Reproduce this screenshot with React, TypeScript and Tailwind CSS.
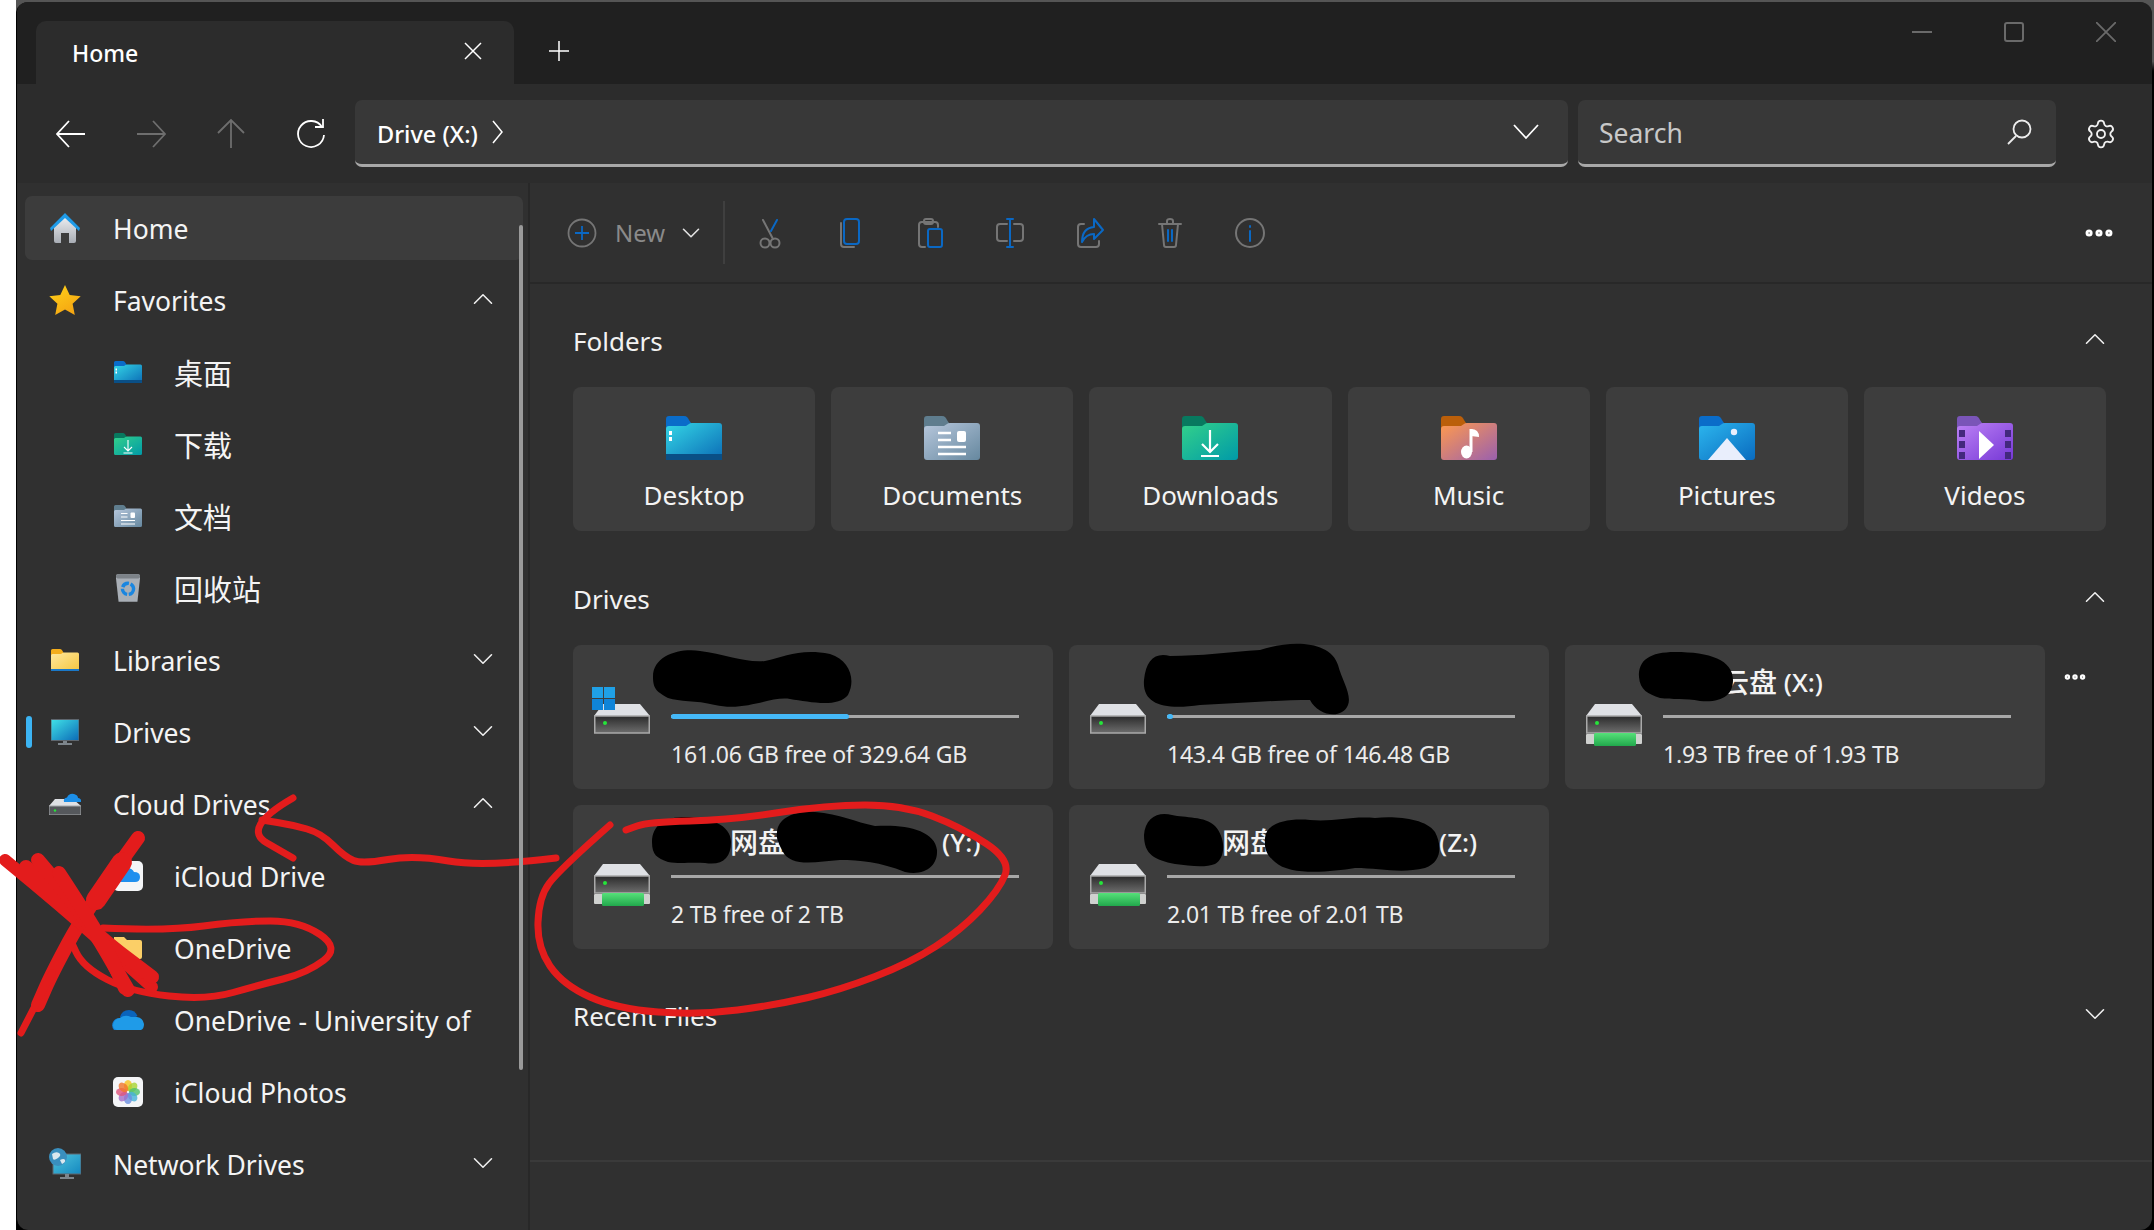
import type { ReactNode } from "react";
import { ChevronDown, ChevronUp, Ellipsis, Settings } from "lucide-react";

const uiFont = "font-['Noto_Sans','Noto_Sans_CJK_SC',sans-serif]";

type Pt = [number, number];

// turns a list of points into a soft pen stroke
function pen(points: Pt[]) {
  let d = `M${points[0][0]} ${points[0][1]}`;
  for (let i = 1; i < points.length - 1; i++) {
    const [x, y] = points[i];
    const [nx, ny] = points[i + 1];
    d += ` Q${x} ${y} ${(x + nx) / 2} ${(y + ny) / 2}`;
  }
  const last = points[points.length - 1];
  return `${d} L${last[0]} ${last[1]}`;
}

function Folder({
  id,
  tab,
  from,
  to,
  small,
  children,
}: {
  id: string;
  tab: string;
  from: string;
  to: string;
  small?: boolean;
  children?: ReactNode;
}) {
  return (
    <svg viewBox="0 0 56 44" className={small ? "w-[28px] h-[22px]" : "w-[56px] h-[44px]"}>
      <defs>
        <linearGradient id={id} x1="0" y1="0" x2="1" y2="1">
          <stop offset="0" stopColor={from} />
          <stop offset="1" stopColor={to} />
        </linearGradient>
      </defs>
      <path d="M0 3a3 3 0 0 1 3-3h15c3 0 4 2 5 4l2 3v12H0z" fill={tab} />
      <path d="M0 13q0-3 3-3h17l3-2q1-1 3-1h27q3 0 3 3v31q0 3-3 3H3q-3 0-3-3z" fill={`url(#${id})`} />
      {children}
    </svg>
  );
}

const DesktopFolder = ({ small }: { small?: boolean }) => (
  <Folder id={small ? "dk-s" : "dk"} tab="#0a6cc9" from="#34d6e6" to="#0b6cb6" small={small}>
    <rect y="38" width="56" height="6" fill="#0a4f86" />
    <rect x="3" y="15" width="3" height="4" fill="#fff" />
    <rect x="3" y="21" width="3" height="4" fill="#fff" />
  </Folder>
);
const DocsFolder = ({ small }: { small?: boolean }) => (
  <Folder id={small ? "dc-s" : "dc"} tab="#5f7d8e" from="#b7c7dc" to="#66889f" small={small}>
    <path d="M14 17h13M14 24h13M14 31h28M14 38h28" stroke="#fff" strokeWidth="2.4" />
    <rect x="33" y="15" width="9" height="11" rx="2" fill="#fff" />
  </Folder>
);
const DownloadFolder = ({ small }: { small?: boolean }) => (
  <Folder id={small ? "dl-s" : "dl"} tab="#08795f" from="#33d18a" to="#009aa8" small={small}>
    <path d="M28 14v22M20 28l8 8 8-8M19 40h18" stroke="#fff" strokeWidth="2.2" fill="none" />
  </Folder>
);
const MusicFolder = () => (
  <Folder id="mu" tab="#bb5f0a" from="#ff9a4e" to="#9a60ae">
    <path d="M30 13v23" stroke="#fff" strokeWidth="3" />
    <ellipse cx="25.5" cy="36" rx="5.5" ry="6.5" fill="#fff" />
    <path d="M30 13q8 0 8 8l-8-1z" fill="#fff" />
  </Folder>
);
const PicturesFolder = () => (
  <Folder id="pi" tab="#0a6cc9" from="#2cb6ee" to="#0a6bbf">
    <path d="M28 22 9 44h38z" fill="#e9eefc" />
    <circle cx="35" cy="16" r="3.2" fill="#e9eefc" />
  </Folder>
);
const VideosFolder = () => (
  <Folder id="vi" tab="#7a55b8" from="#bd82f6" to="#7638d6">
    <path d="M22 15l15 14-15 14z" fill="#fff" />
    <path d="M2 14h6v7H2zM2 25h6v7H2zM2 36h6v7H2zM48 14h6v7h-6zM48 25h6v7h-6zM48 36h6v7h-6z" fill="#43287e" />
  </Folder>
);
const LibraryFolder = () => (
  <Folder id="lb" tab="#f4ad1b" from="#ffe89e" to="#f5c63f" small>
    <rect y="40" width="56" height="4" fill="#1a78c8" />
  </Folder>
);

const HomeIcon = () => (
  <svg viewBox="0 0 32 32" className="w-[32px] h-[32px]">
    <defs>
      <linearGradient id="hm" x1="0" y1="0" x2="0" y2="1">
        <stop offset="0" stopColor="#eef0f3" />
        <stop offset="1" stopColor="#a8adb5" />
      </linearGradient>
    </defs>
    <path d="M5 15 16 4l11 11v14a2 2 0 0 1-2 2h-5V21h-8v10H7a2 2 0 0 1-2-2z" fill="url(#hm)" />
    <path d="M16 1 31 16l-1 3L16 6 2 19l-1-3z" fill="#1f9be8" />
  </svg>
);

const StarIcon = () => (
  <svg viewBox="0 0 32 32" className="w-[32px] h-[32px]">
    <defs>
      <linearGradient id="st" x1="0" y1="0" x2="0.6" y2="1">
        <stop offset="0" stopColor="#ffd31a" />
        <stop offset="1" stopColor="#f5a612" />
      </linearGradient>
    </defs>
    <path d="M16 1l4.7 10 11 1.3-8.100 7.500L25.800 31 16 25.500 6.200 31l2.200-11.200L.3 12.300l11-1.300z" fill="url(#st)" />
  </svg>
);

const RecycleIcon = () => (
  <svg viewBox="0 0 28 32" className="w-[24px] h-[28px]">
    <path d="M0 2q0-2 2-2h24q2 0 2 2v3l-3 27H3L0 5z" fill="#a9afb6" />
    <rect x="0" y="0" width="28" height="5" rx="2" fill="#7c8288" />
    <circle cx="14" cy="17" r="6.500" fill="none" stroke="#1a86e0" strokeWidth="4" strokeDasharray="9 2" />
  </svg>
);

const MonitorIcon = () => (
  <svg viewBox="0 0 28 26" className="w-[28px] h-[26px]">
    <defs>
      <linearGradient id="mn" x1="0" y1="0" x2="1" y2="1">
        <stop offset="0" stopColor="#3fe0e6" />
        <stop offset="1" stopColor="#0c6cb8" />
      </linearGradient>
    </defs>
    <rect width="28" height="22" fill="#5e666e" />
    <rect x="0.500" y="1" width="27" height="20" fill="url(#mn)" />
    <rect x="12" y="22" width="4" height="2" fill="#7d858c" />
    <rect x="7" y="24" width="14" height="2" fill="#7d858c" />
  </svg>
);

const CloudDriveIcon = () => (
  <svg viewBox="0 0 32 22" className="w-[32px] h-[22px]">
    <path d="M0 13 6 6h18l8 7z" fill="#dfe1e5" />
    <rect y="13" width="32" height="9" fill="#55585c" stroke="#a6a8ab" strokeWidth="1" />
    <circle cx="6" cy="17.500" r="1.200" fill="#27e33a" />
    <path d="M15 9q-1-4 3-4.500Q20 0 25 1q4 1 4 4 3 .5 3 2.500V9z" fill="#1c8fe8" />
  </svg>
);

const ICloudIcon = () => (
  <svg viewBox="0 0 30 30" className="w-[30px] h-[30px]">
    <rect width="30" height="30" rx="5" fill="#f4f5f7" />
    <path d="M6 21q-4-1-3-5 1-3 4-3 1-6 7-6 5 0 7 4 6 0 6 5 0 5-5 5z" fill="#1f8fee" />
  </svg>
);

const OneDriveFolderIcon = () => (
  <svg viewBox="0 0 28 22" className="w-[28px] h-[22px]">
    <path d="M0 0h10l3 3h13q2 0 2 2v15q0 2-2 2H2q-2 0-2-2z" fill="#fbcf67" />
  </svg>
);

const OneDriveCloudIcon = () => (
  <svg viewBox="0 0 32 22" className="w-[32px] h-[22px]">
    <path d="M8 8q2-7 9-7 6 0 8.500 6L12 14z" fill="#0a64bb" />
    <path d="M2 21Q-1 17 1 13q2-4 7-4l5 3 2 9z" fill="#1481d8" />
    <path d="M8 9q5-4 11-1l6 0q6 1 7 7 0 5-3 6H5q-4-1-4-5 1-6 7-7z" fill="#1f9be8" />
  </svg>
);

const PhotosIcon = () => {
  const petals = ["#f6c21c", "#a8d433", "#4fc06a", "#45b2d8", "#6a8fe0", "#a36ec8", "#e0527a", "#f0752c"];
  return (
    <svg viewBox="0 0 30 30" className="w-[30px] h-[30px]">
      <rect width="30" height="30" rx="5" fill="#f4f5f7" />
      {petals.map((c, i) => (
        <ellipse key={c} cx="15" cy="8.500" rx="4" ry="5.500" fill={c} opacity="0.8" transform={`rotate(${i * 45} 15 15)`} />
      ))}
    </svg>
  );
};

const NetworkIcon = () => (
  <svg viewBox="0 0 32 32" className="w-[32px] h-[32px]">
    <defs>
      <linearGradient id="nw" x1="0" y1="0" x2="1" y2="1">
        <stop offset="0" stopColor="#4fc4dc" />
        <stop offset="1" stopColor="#1488c0" />
      </linearGradient>
    </defs>
    <rect x="4" y="6" width="28" height="20" fill="url(#nw)" stroke="#5e666e" />
    <rect x="16" y="26" width="4" height="3" fill="#7d858c" />
    <rect x="11" y="29" width="14" height="2" fill="#7d858c" />
    <circle cx="9" cy="9" r="9" fill="#3a8fbe" />
    <path d="M3 6q4-3 7-1t-1 5-5 1zM11 12q4-2 5 0t-3 4z" fill="#dbe8ee" />
  </svg>
);

const DriveIcon = ({ green, windows }: { green?: boolean; windows?: boolean }) => (
  <div className="relative w-[56px] h-[42px] shrink-0">
    <svg viewBox="0 0 56 42" className="w-[56px] h-[42px]">
      <defs>
        <linearGradient id="dv" x1="0" y1="0" x2="0" y2="1">
          <stop offset="0" stopColor="#2b2b2b" />
          <stop offset="1" stopColor="#6d6d6d" />
        </linearGradient>
        <linearGradient id="gb" x1="0" y1="0" x2="0" y2="1">
          <stop offset="0" stopColor="#55e079" />
          <stop offset="1" stopColor="#22a84c" />
        </linearGradient>
      </defs>
      <path d="M0 12 9 0h37l10 12z" fill="#dfe1e5" />
      <rect x="0.750" y="12" width="54.500" height="17" fill="url(#dv)" stroke="#a9a9a9" strokeWidth="1.500" />
      <circle cx="11" cy="19" r="2" fill="#25e53a" />
      {green && (
        <>
          <rect y="30" width="56" height="10" rx="1" fill="#cfd1cf" />
          <rect x="8" y="29" width="42" height="13" rx="1.500" fill="url(#gb)" />
        </>
      )}
    </svg>
    {windows && (
      <div className="absolute left-[-2px] top-[-17px] grid grid-cols-2 gap-[1px] w-[23px]">
        <div className="h-[11px] bg-[#1fa0e6]" />
        <div className="h-[11px] bg-[#1fa0e6]" />
        <div className="h-[11px] bg-[#0f84d8]" />
        <div className="h-[11px] bg-[#0f84d8]" />
      </div>
    )}
  </div>
);

function NavRow({
  icon,
  label,
  child,
  cjk,
  open,
  selected,
  marker,
}: {
  icon: ReactNode;
  label: string;
  child?: boolean;
  cjk?: boolean;
  open?: boolean;
  selected?: boolean;
  marker?: boolean;
}) {
  return (
    <div className="h-[72px] flex items-center relative">
      <div className={`w-[498px] ml-[8px] h-[64px] rounded-[7px] flex items-center ${selected ? "bg-[#3c3c3c]" : ""}`}>
        {marker && <div className="absolute left-[9px] top-[20px] w-[6px] h-[32px] rounded-full bg-[#3cb4f3]" />}
        <div className={`flex justify-center shrink-0 ${child ? "w-[32px] ml-[87px]" : "w-[32px] ml-[24px]"}`}>{icon}</div>
        <span
          className={`pt-[3px] text-[#f4f4f4] whitespace-nowrap ${cjk ? "text-[29px]" : "text-[26.5px]"} ${
            child ? "ml-[30px]" : "ml-[32px]"
          }`}
        >
          {label}
        </span>
        {open !== undefined && (
          <div className="ml-auto mr-[23px] -translate-y-[1px]">
            {open ? <ChevronUp size={34} strokeWidth={1.1} color="#f0f0f0" /> : <ChevronDown size={34} strokeWidth={1.1} color="#f0f0f0" />}
          </div>
        )}
      </div>
    </div>
  );
}

function ToolIcon({ children }: { children: ReactNode }) {
  return (
    <div className="w-[80px] flex justify-center">
      <svg viewBox="0 0 32 32" fill="none" strokeWidth="2" strokeLinecap="round" strokeLinejoin="round" className="w-[32px] h-[32px]">
        {children}
      </svg>
    </div>
  );
}

function SectionHead({ title, open }: { title: string; open: boolean }) {
  return (
    <div className="h-[40px] flex items-center justify-between">
      <span className="text-[26px] text-[#f2f2f2]">{title}</span>
      <div className="-mr-[6px] -translate-y-[2px]">
        {open ? <ChevronUp size={34} strokeWidth={1.1} color="#f0f0f0" /> : <ChevronDown size={34} strokeWidth={1.1} color="#f0f0f0" />}
      </div>
    </div>
  );
}

function FolderCard({ icon, label }: { icon: ReactNode; label: string }) {
  return (
    <div className="h-[144px] rounded-[8px] bg-[#3d3d3d] flex flex-col items-center pt-[29px]">
      {icon}
      <span className="text-[26px] text-[#f4f4f4] mt-[16px]">{label}</span>
    </div>
  );
}

function DriveCard({
  name,
  stat,
  used,
  green,
  windows,
}: {
  name: ReactNode;
  stat: string;
  used?: string;
  green?: boolean;
  windows?: boolean;
}) {
  return (
    <div className="h-[144px] rounded-[8px] bg-[#3d3d3d] flex pl-[21px]">
      <div className="pt-[59px]">
        <DriveIcon green={green} windows={windows} />
      </div>
      <div className="ml-[21px] w-[348px] pt-[20px]">
        <div className="h-[38px] -translate-y-[2px] flex items-center text-[26px] font-medium text-[#f4f4f4] whitespace-nowrap">{name}</div>
        <div className="mt-[12px] h-[3px] bg-[#a8a8a8] relative">
          {used && <div className={`absolute left-0 top-[-1px] h-[5px] rounded-full bg-[#45b9f8] ${used}`} />}
        </div>
        <div className="mt-[20px] h-[32px] flex items-center text-[23px] tracking-[-0.22px] text-[#ececec] whitespace-nowrap">{stat}</div>
      </div>
    </div>
  );
}

const Gap = ({ w }: { w: string }) => <span className={`inline-block shrink-0 ${w}`} />;

const blobs = [
  "M653 677C653 655 680 648 700 651C725 654 745 663 765 661C785 657 800 648 830 654C850 660 856 680 848 695C838 708 810 702 790 699C770 696 745 712 715 705C695 700 680 702 668 698C658 692 653 690 653 677Z",
  "M1144 680C1146 660 1155 652 1170 656C1200 656 1230 652 1260 650C1290 640 1330 640 1338 665C1342 680 1352 695 1348 705C1342 720 1318 716 1310 700C1280 700 1240 703 1200 705C1165 710 1142 705 1144 680Z",
  "M1639 677C1638 660 1650 652 1675 652C1710 652 1733 660 1733 680C1733 695 1722 703 1700 701C1685 698 1672 700 1660 698C1648 694 1640 690 1639 677Z",
  "M652 842C652 825 665 817 685 817C710 817 731 825 731 842C731 858 722 866 705 863C690 862 680 864 668 862C657 858 652 855 652 842Z",
  "M777 832C778 818 795 810 815 812C840 814 855 822 875 826C905 824 935 830 937 850C938 866 925 876 905 872C880 862 860 860 840 860C815 862 790 868 782 850C778 842 776 838 777 832Z",
  "M1144 835C1145 818 1158 811 1172 815C1185 818 1205 816 1215 826C1226 838 1226 858 1215 864C1205 868 1190 866 1175 864C1155 860 1144 855 1144 835Z",
  "M1265 838C1266 822 1290 818 1310 820C1335 822 1350 816 1375 818C1395 816 1425 818 1435 832C1442 845 1442 862 1425 868C1400 874 1380 868 1355 868C1330 872 1290 876 1275 862C1267 855 1264 850 1265 838Z",
];

const penStrokes: { pts: Pt[]; w: number }[] = [
  // ring around the Y: drive
  {
    w: 7,
    pts: [[610, 825], [559, 870], [539, 897], [537, 947], [563, 985], [617, 1009], [699, 1015], [776, 1005], [840, 990], [910, 963], [961, 930], [999, 890], [1011, 860], [961, 827], [903, 805], [827, 805], [731, 820], [648, 822], [626, 830]],
  },
  // arrow into Cloud Drives
  {
    w: 7,
    pts: [[556, 858], [483, 867], [414, 855], [362, 864], [345, 857], [321, 833], [293, 825], [262, 820]],
  },
  { w: 7, pts: [[293, 798], [241, 828], [293, 858]] },
  // loop around OneDrive
  {
    w: 7,
    pts: [[103, 928], [166, 931], [241, 921], [300, 921], [340, 948], [307, 973], [259, 985], [207, 1000], [131, 992], [83, 967], [69, 937]],
  },
  // the big cross
  { w: 14, pts: [[138, 838], [86, 910], [52, 973], [38, 1005]] },
  { w: 20, pts: [[122, 862], [96, 900]] },
  { w: 7, pts: [[52, 973], [21, 1033]] },
  { w: 12, pts: [[5, 860], [60, 905], [152, 987]] },
  { w: 14, pts: [[26, 867], [90, 930], [152, 977]] },
  { w: 14, pts: [[38, 860], [85, 915], [128, 990]] },
  { w: 14, pts: [[59, 873], [100, 935], [125, 988]] },
];

export default function App() {
  return (
    <div className={`relative w-[2154px] h-[1230px] overflow-hidden bg-white flex ${uiFont}`}>
      <div className="w-[16px] shrink-0" />
      <div className="flex-1 pt-[2px] pr-[2px] bg-linear-to-b from-[#555555] from-[5%] to-black to-[6%]">
        <div className="h-[1228px] flex flex-col rounded-[12px] bg-[#303030] border-l border-black overflow-hidden">
          {/* title bar */}
          <div className="h-[82px] shrink-0 bg-[#202020] flex items-end pl-[19px]">
            <div className="w-[478px] h-[63px] rounded-t-[10px] bg-[#2c2c2c] flex items-center pl-[36px] pr-[32px] justify-between">
              <span className="pt-[1px] text-[23px] font-medium text-white">Home</span>
              <svg viewBox="0 0 18 18" className="w-[18px] h-[18px] mb-[4px]" stroke="#fff" strokeWidth="1.500">
                <path d="M1 1l16 16M17 1 1 17" />
              </svg>
            </div>
            <div className="h-[63px] flex items-center ml-[35px]">
              <svg viewBox="0 0 20 20" className="w-[20px] h-[20px] mb-[4px]" stroke="#fff" strokeWidth="1.500">
                <path d="M10 0v20M0 10h20" />
              </svg>
            </div>
            <div className="ml-auto self-start flex items-center gap-[72px] pt-[20px] pr-[36px]">
              <div className="w-[20px] h-[2px] bg-[#6a6a6a]" />
              <div className="w-[20px] h-[20px] rounded-[3px] border-2 border-[#6a6a6a]" />
              <svg viewBox="0 0 20 20" className="w-[20px] h-[20px]" stroke="#6a6a6a" strokeWidth="1.800">
                <path d="M0 0l20 20M20 0 0 20" />
              </svg>
            </div>
          </div>

          {/* navigation row */}
          <div className="h-[99px] shrink-0 bg-[#2c2c2c] flex items-center pl-[14px]">
            <div className="flex w-[324px]">
              <div className="w-[80px] flex justify-center">
                <svg viewBox="0 0 32 32" className="w-[32px] h-[32px]" fill="none" stroke="#fff" strokeWidth="1.800">
                  <path d="M30 16H3M14 3 2 16l12 13" />
                </svg>
              </div>
              <div className="w-[80px] flex justify-center">
                <svg viewBox="0 0 32 32" className="w-[32px] h-[32px]" fill="none" stroke="#6e6e6e" strokeWidth="1.800">
                  <path d="M2 16h27M18 3l12 13-12 13" />
                </svg>
              </div>
              <div className="w-[80px] flex justify-center">
                <svg viewBox="0 0 32 32" className="w-[32px] h-[32px]" fill="none" stroke="#6e6e6e" strokeWidth="1.800">
                  <path d="M16 30V3M3 15 16 2l13 13" />
                </svg>
              </div>
              <div className="w-[80px] flex justify-center">
                <svg viewBox="0 0 32 32" className="w-[32px] h-[32px]" fill="none" stroke="#fff" strokeWidth="1.800">
                  <path d="M27 9a13 13 0 1 0 2 8" />
                  <path d="M20 9h8V1" />
                </svg>
              </div>
            </div>
            <div className="w-[1213px] h-[67px] rounded-[7px] bg-[#383838] border-b-[3px] border-[#a8a8a8] flex items-center pl-[22px] pr-[29px]">
              <span className="pt-[5px] text-[23.5px] font-medium text-white">Drive (X:)</span>
              <svg viewBox="0 0 12 24" className="w-[12px] h-[24px] ml-[14px]" fill="none" stroke="#fff" strokeWidth="1.500">
                <path d="M1 1l9 11-9 11" />
              </svg>
              <svg viewBox="0 0 26 16" className="w-[26px] h-[16px] ml-auto" fill="none" stroke="#fff" strokeWidth="1.800">
                <path d="M1 1l12 13L25 1" />
              </svg>
            </div>
            <div className="ml-[10px] w-[478px] h-[67px] rounded-[7px] bg-[#383838] border-b-[3px] border-[#a8a8a8] flex items-center pl-[21px] pr-[24px] justify-between">
              <span className="pt-[3px] text-[26.5px] text-[#c8c8c8]">Search</span>
              <svg viewBox="0 0 26 26" className="w-[26px] h-[26px]" fill="none" stroke="#ececec" strokeWidth="1.800">
                <circle cx="16" cy="10" r="8.500" />
                <path d="M10 17 2 25" />
              </svg>
            </div>
            <Settings size={32} strokeWidth={1.4} color="#f0f0f0" className="ml-[29px]" />
          </div>

          <div className="flex-1 flex min-h-0">
            {/* sidebar */}
            <aside className="w-[513px] shrink-0 relative pt-[9px] border-r-2 border-[#282828]">
              <div className="absolute z-10 right-[5px] top-[42px] w-[4px] h-[845px] rounded-full bg-[#9a9a9a]" />
              <NavRow selected icon={<HomeIcon />} label="Home" />
              <NavRow open icon={<StarIcon />} label="Favorites" />
              <NavRow child cjk icon={<DesktopFolder small />} label="桌面" />
              <NavRow child cjk icon={<DownloadFolder small />} label="下载" />
              <NavRow child cjk icon={<DocsFolder small />} label="文档" />
              <NavRow child cjk icon={<RecycleIcon />} label="回收站" />
              <NavRow open={false} icon={<LibraryFolder />} label="Libraries" />
              <NavRow open={false} marker icon={<MonitorIcon />} label="Drives" />
              <NavRow open icon={<CloudDriveIcon />} label="Cloud Drives" />
              <NavRow child icon={<ICloudIcon />} label="iCloud Drive" />
              <NavRow child icon={<OneDriveFolderIcon />} label="OneDrive" />
              <NavRow child icon={<OneDriveCloudIcon />} label="OneDrive - University of" />
              <NavRow child icon={<PhotosIcon />} label="iCloud Photos" />
              <NavRow open={false} icon={<NetworkIcon />} label="Network Drives" />
            </aside>

            <main className="flex-1 flex flex-col min-w-0">
              {/* command bar */}
              <div className="h-[101px] shrink-0 border-b-2 border-[#282828] flex items-center pl-[37px] pr-[36px]">
                <svg viewBox="0 0 30 30" className="w-[30px] h-[30px]" fill="none" strokeWidth="1.800">
                  <circle cx="15" cy="15" r="13.500" stroke="#757575" />
                  <path d="M15 8v14M8 15h14" stroke="#0a68c4" />
                </svg>
                <span className="text-[24px] text-[#8a8a8a] ml-[18px]">New</span>
                <ChevronDown size={30} strokeWidth={1.3} color="#e0e0e0" className="ml-[11px]" />
                <div className="w-[2px] h-[63px] bg-[#3f3f3f] ml-[17px] mr-[5px]" />
                <ToolIcon>
                  <circle cx="11" cy="26" r="4.500" stroke="#757575" />
                  <circle cx="21" cy="26" r="4.500" stroke="#757575" />
                  <path d="M9 3l10 19" stroke="#757575" />
                  <path d="M23 3l-6 11" stroke="#0a68c4" />
                </ToolIcon>
                <ToolIcon>
                  <path d="M7 6v21q0 3 3 3h10" stroke="#757575" />
                  <rect x="10" y="2" width="15" height="25" rx="3" stroke="#0a68c4" />
                </ToolIcon>
                <ToolIcon>
                  <path d="M11 30H8q-3 0-3-3V8q0-3 3-3h13q3 0 3 3v2" stroke="#757575" />
                  <rect x="10" y="2" width="9" height="5" rx="2" stroke="#757575" />
                  <rect x="14" y="12" width="14" height="18" rx="2" stroke="#0a68c4" />
                </ToolIcon>
                <ToolIcon>
                  <path d="M13 7H6q-3 0-3 3v11q0 3 3 3h7M20 7h6q3 0 3 3v11q0 3-3 3h-6" stroke="#757575" />
                  <path d="M16 2v28M13 2h6M13 30h6" stroke="#0a68c4" />
                </ToolIcon>
                <ToolIcon>
                  <path d="M10 7H7q-3 0-3 3v17q0 3 3 3h15q3 0 3-3v-3" stroke="#757575" />
                  <path d="M20 2l9 11-9 9v-5q-8 0-12 8 0-14 12-15z" stroke="#0a68c4" />
                </ToolIcon>
                <ToolIcon>
                  <path d="M5 7h22M8 7l2 21q0 2 2 2h8q2 0 2-2l2-21M13 7V4q0-2 3-2t3 2v3" stroke="#757575" />
                  <path d="M14 13v11M18 13v11" stroke="#0a68c4" />
                </ToolIcon>
                <ToolIcon>
                  <circle cx="16" cy="16" r="14" stroke="#757575" />
                  <path d="M16 14v10M16 9v1" stroke="#0a68c4" />
                </ToolIcon>
                <Ellipsis size={34} strokeWidth={3} color="#fff" className="ml-auto" />
              </div>

              {/* folders and drives */}
              <div className="flex-1 pl-[43px] pr-[46px] pt-[37px]">
                <SectionHead title="Folders" open />
                <div className="grid grid-cols-6 gap-[16px] mt-[26px]">
                  <FolderCard icon={<DesktopFolder />} label="Desktop" />
                  <FolderCard icon={<DocsFolder />} label="Documents" />
                  <FolderCard icon={<DownloadFolder />} label="Downloads" />
                  <FolderCard icon={<MusicFolder />} label="Music" />
                  <FolderCard icon={<PicturesFolder />} label="Pictures" />
                  <FolderCard icon={<VideosFolder />} label="Videos" />
                </div>

                <div className="mt-[48px]">
                  <SectionHead title="Drives" open />
                </div>
                <div className="grid grid-cols-[480px_480px_480px_1fr] gap-[16px] mt-[26px]">
                  <DriveCard windows name={<Gap w="w-[100px]" />} used="w-[178px]" stat="161.06 GB free of 329.64 GB" />
                  <DriveCard name={<Gap w="w-[100px]" />} used="w-[6px]" stat="143.4 GB free of 146.48 GB" />
                  <DriveCard
                    green
                    name={
                      <>
                        <Gap w="w-[58px]" />
                        <span className="text-[28px]">云盘</span>&nbsp;(X:)
                      </>
                    }
                    stat="1.93 TB free of 1.93 TB"
                  />
                  <div className="pt-[19px] pl-[1px]">
                    <Ellipsis size={26} strokeWidth={3} color="#fff" />
                  </div>
                  <DriveCard
                    green
                    name={
                      <>
                        <Gap w="w-[59px]" />
                        <span className="text-[28px]">网盘</span>
                        <Gap w="w-[156px]" />
                        (Y:)
                      </>
                    }
                    stat="2 TB free of 2 TB"
                  />
                  <DriveCard
                    green
                    name={
                      <>
                        <Gap w="w-[55px]" />
                        <span className="text-[28px]">网盘</span>
                        <Gap w="w-[161px]" />
                        (Z:)
                      </>
                    }
                    stat="2.01 TB free of 2.01 TB"
                  />
                </div>

                <div className="mt-[47px]">
                  <SectionHead title="Recent Files" open={false} />
                </div>
              </div>
              <div className="h-[70px] shrink-0 border-t-2 border-[#3a3a3a]" />
            </main>
          </div>
        </div>
      </div>

      {/* hand drawn marks on top of the screenshot */}
      <svg viewBox="0 0 2154 1230" className="absolute inset-0 w-[2154px] h-[1230px] pointer-events-none">
        {blobs.map((d) => (
          <path key={d} d={d} fill="#000" />
        ))}
        {penStrokes.map((s, i) => (
          <path key={i} d={pen(s.pts)} fill="none" stroke="#e31c1c" strokeWidth={s.w} strokeLinecap="round" strokeLinejoin="round" />
        ))}
      </svg>
    </div>
  );
}
